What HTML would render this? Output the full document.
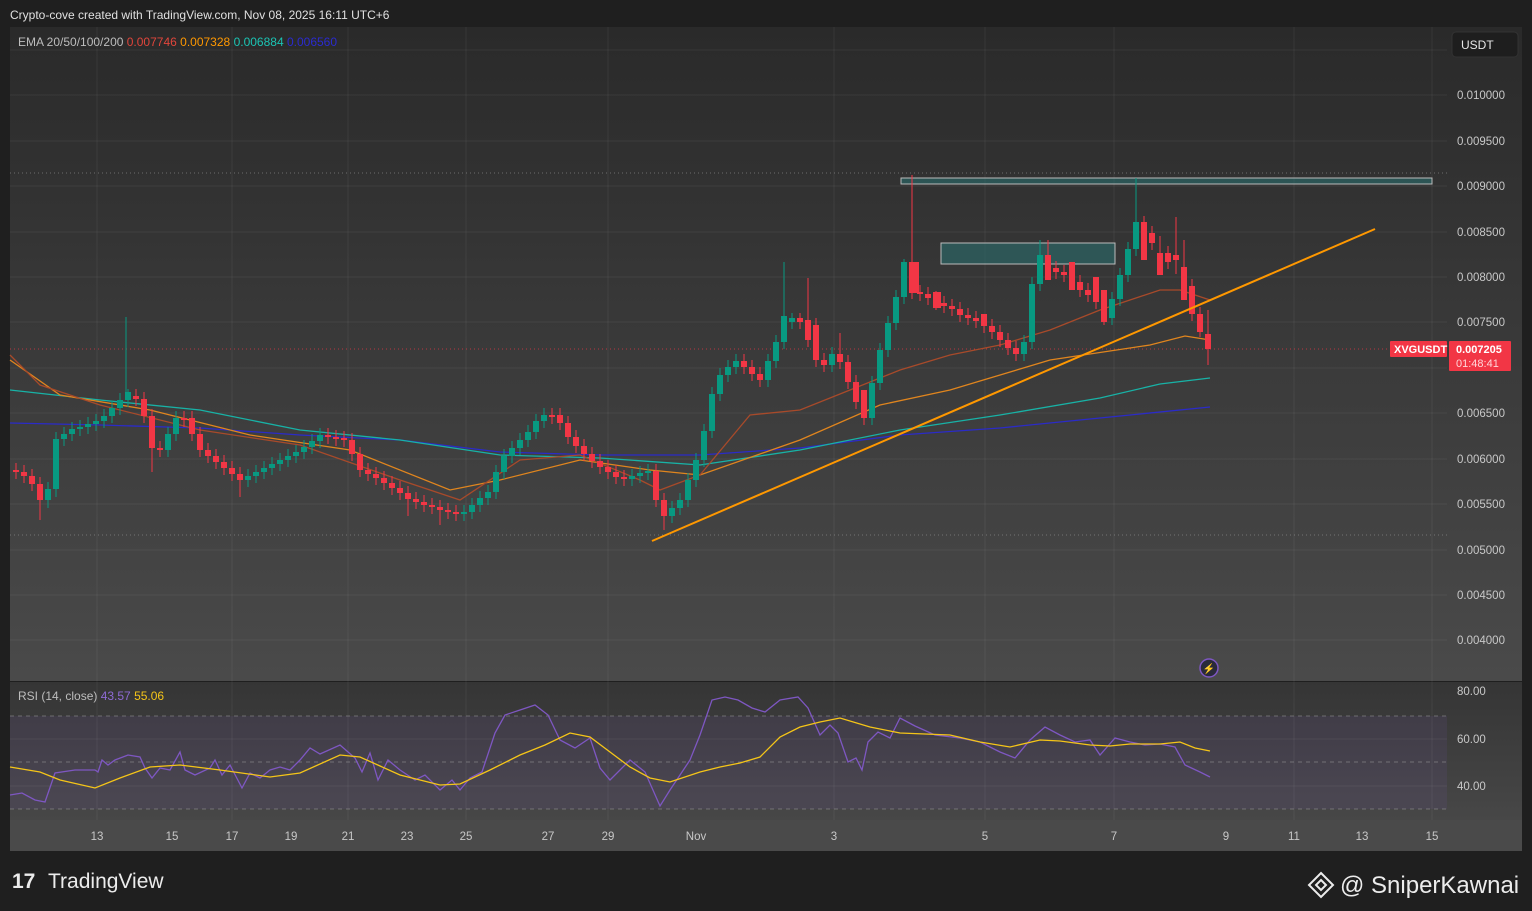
<!DOCTYPE html>
<html><head><meta charset="utf-8"><style>
html,body{margin:0;padding:0;background:#1f1f1f;width:1532px;height:911px;overflow:hidden;font-family:"Liberation Sans",sans-serif}
svg text{font-family:"Liberation Sans",sans-serif}
</style></head><body>
<svg width="1532" height="911" xmlns="http://www.w3.org/2000/svg">
<defs>
<linearGradient id="bg" x1="0" y1="0" x2="0" y2="1"><stop offset="0" stop-color="#2a2a2a"/><stop offset="1" stop-color="#4a4a4a"/></linearGradient>
<linearGradient id="rb" x1="0" y1="0" x2="0" y2="1"><stop offset="0" stop-color="#353535"/><stop offset="1" stop-color="#474747"/></linearGradient>
</defs>
<rect x="0" y="0" width="1532" height="911" fill="#1f1f1f"/>
<text x="10" y="19" font-size="12" fill="#e0e0e0">Crypto-cove created with TradingView.com, Nov 08, 2025 16:11 UTC+6</text>
<rect x="10" y="27" width="1512" height="654" fill="url(#bg)"/>
<rect x="10" y="682" width="1512" height="138" fill="url(#rb)"/>
<rect x="10" y="716" width="1437" height="93" fill="#7e57c2" fill-opacity="0.1"/>
<rect x="10" y="820" width="1512" height="31" fill="#4a4a4a"/>
<g stroke="#ffffff" stroke-opacity="0.06" stroke-width="1">
<line x1="10" y1="50" x2="1447" y2="50"/><line x1="10" y1="95" x2="1447" y2="95"/><line x1="10" y1="141" x2="1447" y2="141"/><line x1="10" y1="186" x2="1447" y2="186"/><line x1="10" y1="232" x2="1447" y2="232"/><line x1="10" y1="277" x2="1447" y2="277"/><line x1="10" y1="322" x2="1447" y2="322"/><line x1="10" y1="368" x2="1447" y2="368"/><line x1="10" y1="413" x2="1447" y2="413"/><line x1="10" y1="459" x2="1447" y2="459"/><line x1="10" y1="504" x2="1447" y2="504"/><line x1="10" y1="550" x2="1447" y2="550"/><line x1="10" y1="595" x2="1447" y2="595"/><line x1="10" y1="640" x2="1447" y2="640"/>
<line x1="10" y1="739" x2="1447" y2="739"/><line x1="10" y1="786" x2="1447" y2="786"/>
<line x1="97" y1="27" x2="97" y2="820"/><line x1="232" y1="27" x2="232" y2="820"/><line x1="348" y1="27" x2="348" y2="820"/><line x1="466" y1="27" x2="466" y2="820"/><line x1="608" y1="27" x2="608" y2="820"/><line x1="834" y1="27" x2="834" y2="820"/><line x1="985" y1="27" x2="985" y2="820"/><line x1="1114" y1="27" x2="1114" y2="820"/><line x1="1294" y1="27" x2="1294" y2="820"/><line x1="1432" y1="27" x2="1432" y2="820"/>
</g>
<g stroke="#a0a0a0" stroke-opacity="0.5" stroke-dasharray="4,4"><line x1="10" y1="716" x2="1447" y2="716"/><line x1="10" y1="762" x2="1447" y2="762"/><line x1="10" y1="809" x2="1447" y2="809"/></g>
<line x1="10" y1="173" x2="1447" y2="173" stroke="#aaa" stroke-opacity="0.5" stroke-dasharray="1,3"/>
<line x1="10" y1="535" x2="1447" y2="535" stroke="#aaa" stroke-opacity="0.5" stroke-dasharray="1,3"/>
<line x1="10" y1="349" x2="1447" y2="349" stroke="#f23645" stroke-opacity="0.7" stroke-dasharray="1,3"/>
<rect x="901" y="178" width="531" height="6" fill="#2a6d6d" fill-opacity="0.6" stroke="#bbb" stroke-width="1"/>
<rect x="941" y="243" width="174" height="21" fill="#2a6d6d" fill-opacity="0.6" stroke="#bbb" stroke-width="1"/>
<g fill="none" stroke-width="1.3">
<polyline stroke="#2b2bc8" points="10,423 100,425 200,428 300,435 400,440 500,452 600,455 700,455 800,448 900,435 1000,428 1100,418 1210,407"/>
<polyline stroke="#18b2a6" points="10,390 100,400 200,410 300,430 400,440 500,455 600,458 700,465 800,450 900,430 1000,415 1100,398 1160,384 1210,378"/>
<polyline stroke="#e0851e" points="10,360 60,395 150,410 250,435 350,450 450,490 500,480 580,460 650,470 700,475 800,440 880,405 950,390 1050,360 1150,345 1185,336 1210,340"/>
<polyline stroke="#a84a2a" points="10,355 40,385 100,405 200,430 300,445 400,480 460,500 520,460 580,455 640,480 660,490 700,475 750,415 800,410 850,390 900,370 950,355 1000,345 1050,330 1100,310 1160,290 1180,290 1210,300"/>
</g>
<path fill="none" stroke="#089981" stroke-width="1" d="M48 482V508M56 432V497M64 427V446M72 422V441M80 420V436M88 417V434M96 414V431M104 409V428M112 401V423M120 393V415M128 389V407M126 317V400M168 427V457M176 411V441M248 469V487M256 465V483M264 461V479M272 457V475M280 453V471M288 449V467M296 445V463M304 440V459M312 434V454M320 428V448M464 505V521M472 498V519M480 491V512M488 485V505M496 465V499M504 449V479M512 441V463M520 433V455M528 425V447M536 414V439M544 408V428M632 469V486M640 466V483M648 464V480M672 501V523M680 493V515M688 473V507M696 453V487M704 424V467M712 387V438M720 368V401M728 360V382M736 354V374M768 354V387M776 335V368M784 262V349M792 313V329M832 347V372M872 376V425M880 343V390M888 316V357M896 290V330M904 259V304M1024 335V361M1032 277V349M1040 240V291M1112 292V325M1120 268V306M1128 242V282M1136 178V256"/>
<path fill="none" stroke="#f23645" stroke-width="1" d="M16 463V479M24 465V483M32 469V491M40 477V520M136 389V406M144 392V423M152 409V472M160 441V457M184 411V427M192 411V441M200 427V457M208 443V463M216 449V469M224 455V475M232 461V481M240 467V497M328 428V444M336 430V446M344 431V447M352 433V461M360 447V477M368 463V481M376 467V485M384 471V490M392 476V495M400 481V500M408 486V516M416 492V509M424 495V512M432 498V514M440 500V525M448 503V519M456 505V521M552 408V424M560 408V430M568 416V444M576 430V453M584 439V461M592 447V468M600 454V474M608 460V479M616 465V484M624 470V486M656 464V507M664 493V530M744 354V374M752 360V381M760 367V387M800 313V329M808 278V347M816 318V367M824 353V372M840 333V369M848 355V389M856 375V409M864 395V425M912 175V299M920 285V301M928 287V305M936 291V310M944 296V313M952 299V316M960 302V322M968 308V325M976 311V328M984 314V333M992 319V339M1000 325V347M1008 333V355M1016 341V361M1048 240V275M1056 261V279M1064 265V282M1072 262V289M1080 275V297M1088 283V302M1096 288V309M1104 295V325M1144 216V240M1152 226V250M1160 236V260M1168 246V269M1176 217V274M1184 240V293M1192 279V321M1200 307V337M1208 310V365"/>
<path fill="#089981" d="M45 489H51V500H45zM53 439H59V489H53zM61 434H67V439H61zM69 429H75V434H69zM77 427H83V429H77zM85 424H91V427H85zM93 421H99V424H93zM101 416H107V421H101zM109 408H115V416H109zM117 400H123V408H117zM125 392H131V400H125zM165 434H171V450H165zM173 418H179V434H173zM245 476H251V480H245zM253 472H259V476H253zM261 468H267V472H261zM269 464H275V468H269zM277 460H283V464H277zM285 456H291V460H285zM293 452H299V456H293zM301 447H307V452H301zM309 441H315V447H309zM317 435H323V441H317zM461 512H467V514H461zM469 505H475V512H469zM477 498H483V505H477zM485 492H491V498H485zM493 472H499V492H493zM501 456H507V472H501zM509 448H515V456H509zM517 440H523V448H517zM525 432H531V440H525zM533 421H539V432H533zM541 415H547V421H541zM629 476H635V479H629zM637 473H643V476H637zM645 471H651V473H645zM669 508H675V516H669zM677 500H683V508H677zM685 480H691V500H685zM693 460H699V480H693zM701 431H707V460H701zM709 394H715V431H709zM717 375H723V394H717zM725 367H731V375H725zM733 361H739V367H733zM765 361H771V380H765zM773 342H779V361H773zM781 316H787V342H781zM789 318H795V322H789zM829 354H835V365H829zM869 383H875V418H869zM877 350H883V383H877zM885 323H891V350H885zM893 297H899V323H893zM901 262H907V297H901zM1021 342H1027V354H1021zM1029 284H1035V342H1029zM1037 255H1043V284H1037zM1109 299H1115V318H1109zM1117 275H1123V299H1117zM1125 249H1131V275H1125zM1133 222H1139V249H1133z"/>
<path fill="#f23645" d="M13 470H19V472H13zM21 472H27V476H21zM29 476H35V484H29zM37 484H43V500H37zM133 396H139V399H133zM141 399H147V416H141zM149 416H155V448H149zM157 448H163V450H157zM181 418H187V420H181zM189 418H195V434H189zM197 434H203V450H197zM205 450H211V456H205zM213 456H219V462H213zM221 462H227V468H221zM229 468H235V474H229zM237 474H243V480H237zM325 435H331V437H325zM333 437H339V439H333zM341 438H347V440H341zM349 440H355V454H349zM357 454H363V470H357zM365 470H371V474H365zM373 474H379V478H373zM381 478H387V483H381zM389 483H395V488H389zM397 488H403V493H397zM405 493H411V499H405zM413 499H419V502H413zM421 502H427V505H421zM429 505H435V507H429zM437 507H443V510H437zM445 510H451V512H445zM453 512H459V514H453zM549 415H555V417H549zM557 415H563V423H557zM565 423H571V437H565zM573 437H579V446H573zM581 446H587V454H581zM589 454H595V461H589zM597 461H603V467H597zM605 467H611V472H605zM613 472H619V477H613zM621 477H627V479H621zM653 471H659V500H653zM661 500H667V516H661zM741 361H747V367H741zM749 367H755V374H749zM757 374H763V380H757zM797 318H803V322H797zM805 320H811V340H805zM813 325H819V360H813zM821 360H827V365H821zM837 354H843V362H837zM845 362H851V382H845zM853 382H859V402H853zM861 390H867V418H861zM909 262H919V293H909zM917 292H923V294H917zM925 294H931V298H925zM933 292H941V308H933zM941 303H947V306H941zM949 306H955V309H949zM957 309H963V315H957zM965 315H971V318H965zM973 318H979V321H973zM981 314H987V326H981zM989 326H995V332H989zM997 332H1003V340H997zM1005 340H1011V348H1005zM1013 348H1019V354H1013zM1045 255H1051V280H1045zM1053 268H1059V272H1053zM1061 272H1067V275H1061zM1069 262H1075V290H1069zM1077 282H1083V290H1077zM1085 290H1091V295H1085zM1093 277H1099V302H1093zM1101 290H1107V322H1101zM1141 222H1147V260H1141zM1149 233H1155V243H1149zM1157 253H1163V275H1157zM1165 253H1171V262H1165zM1173 255H1179V260H1173zM1181 267H1187V300H1181zM1189 286H1195V314H1189zM1197 314H1203V332H1197zM1205 334H1211V349H1205z"/>
<line x1="652" y1="541" x2="1375" y2="229" stroke="#ff9800" stroke-width="2"/>
<circle cx="1209" cy="668" r="9" fill="#2a2a3a" stroke="#7e57c2" stroke-width="1.5"/>
<text x="1209" y="672" font-size="10" fill="#b39ddb" text-anchor="middle">⚡</text>
<g fill="none" stroke-width="1.3">
<polyline stroke="#7e57c2" points="10,795 22,793 35,800 45,802 55,773 75,770 95,770 98,772 102,760 108,765 115,760 128,755 140,757 145,768 152,778 160,768 170,770 180,752 185,770 195,775 210,768 215,760 222,775 230,765 242,788 250,773 260,778 270,770 280,767 290,770 300,760 310,748 320,754 340,745 355,758 362,772 370,753 378,780 388,760 400,770 415,780 425,775 440,790 452,780 460,790 470,778 482,772 495,733 505,715 520,710 535,705 548,715 560,740 575,748 590,738 600,768 610,780 630,760 645,772 660,806 670,790 680,775 690,760 700,735 712,700 725,697 738,700 752,708 765,712 780,700 798,697 808,708 820,735 830,725 838,733 848,762 856,758 862,770 868,742 878,732 890,738 900,718 915,726 935,735 960,738 980,742 1000,752 1015,758 1030,740 1045,727 1060,735 1075,742 1090,740 1100,755 1115,738 1130,742 1145,745 1160,744 1175,747 1185,765 1200,772 1210,777"/>
<polyline stroke="#f5c518" points="10,767 40,772 60,780 95,788 120,778 150,767 180,765 220,770 270,777 300,773 340,755 360,757 400,775 440,785 460,784 490,770 520,755 545,745 570,733 590,737 610,752 630,767 650,778 670,782 700,772 720,767 740,763 760,757 780,737 800,727 820,722 840,718 870,727 900,733 950,735 980,742 1010,747 1040,740 1060,741 1090,745 1110,746 1130,744 1160,744 1180,742 1195,748 1210,751"/>
</g>
<rect x="1452" y="32" width="66" height="25" rx="4" fill="#1e1e1e" stroke="#333"/>
<text x="1461" y="49" font-size="12" fill="#e6e6e6">USDT</text>
<g font-size="11.5" fill="#c8c8c8">
<text x="1457" y="99">0.010000</text><text x="1457" y="145">0.009500</text><text x="1457" y="190">0.009000</text><text x="1457" y="236">0.008500</text><text x="1457" y="281">0.008000</text><text x="1457" y="326">0.007500</text><text x="1457" y="417">0.006500</text><text x="1457" y="463">0.006000</text><text x="1457" y="508">0.005500</text><text x="1457" y="554">0.005000</text><text x="1457" y="599">0.004500</text><text x="1457" y="644">0.004000</text>
<text x="1457" y="695">80.00</text><text x="1457" y="743">60.00</text><text x="1457" y="790">40.00</text>
</g>
<rect x="1390" y="341" width="57" height="16" rx="1" fill="#f23645"/>
<text x="1394" y="353" font-size="11" fill="#fff" font-weight="bold">XVGUSDT</text>
<rect x="1449" y="341" width="62" height="30" rx="1" fill="#f23645"/>
<text x="1456" y="353" font-size="11" fill="#fff" font-weight="bold">0.007205</text>
<text x="1456" y="367" font-size="11" fill="#ffd6d9">01:48:41</text>
<text x="18" y="46" font-size="12" fill="#bdbdbd">EMA 20/50/100/200 <tspan fill="#e0453b">0.007746</tspan> <tspan fill="#ff9800">0.007328</tspan> <tspan fill="#1bc4b4">0.006884</tspan> <tspan fill="#2b2bd0">0.006560</tspan></text>
<text x="18" y="700" font-size="12" fill="#bdbdbd">RSI (14, close) <tspan fill="#8e6ad4">43.57</tspan> <tspan fill="#f5c518">55.06</tspan></text>
<g font-size="11.5" fill="#c8c8c8" text-anchor="middle">
<text x="97" y="840">13</text><text x="172" y="840">15</text><text x="232" y="840">17</text><text x="291" y="840">19</text><text x="348" y="840">21</text><text x="407" y="840">23</text><text x="466" y="840">25</text><text x="548" y="840">27</text><text x="608" y="840">29</text><text x="696" y="840">Nov</text><text x="834" y="840">3</text><text x="985" y="840">5</text><text x="1114" y="840">7</text><text x="1226" y="840">9</text><text x="1294" y="840">11</text><text x="1362" y="840">13</text><text x="1432" y="840">15</text>
</g>
<text x="12" y="888" font-size="21" fill="#ececec" font-weight="bold">17</text>
<text x="48" y="888" font-size="21" fill="#ececec">TradingView</text>
<g transform="translate(1321,885)" fill="none" stroke="#ececec" stroke-width="2"><path d="M0,-12 L12,0 L0,12 L-12,0 Z"/><path d="M0,-5 L5,0 L0,5 L-5,0 Z"/></g>
<text x="1340" y="893" font-size="24" fill="#ececec">@ SniperKawnai</text>
</svg>
</body></html>
